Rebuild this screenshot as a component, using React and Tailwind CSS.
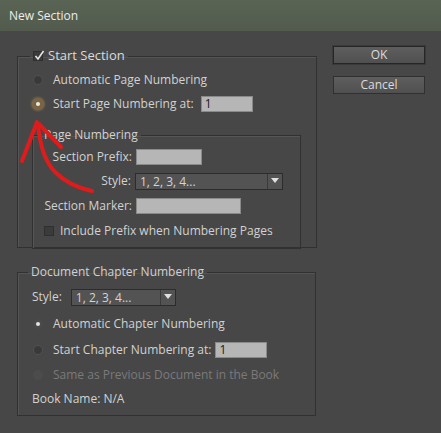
import React from "react";

const font = "font-['Open_Sans','DejaVu_Sans',sans-serif]";

function Radio({ on, disabled }) {
  if (on === "glow") {
    return (
      <span className="w-[12px] h-[12px] rounded-full bg-[#7a6446] shadow-[0_0_3px_#b08850] flex items-center justify-center">
        <span className="w-[4px] h-[4px] rounded-full bg-[#f2ead8]" />
      </span>
    );
  }
  if (on) {
    return (
      <span className="w-[10px] h-[10px] rounded-full bg-[#4a4a4a] flex items-center justify-center">
        <span className="w-[4px] h-[4px] rounded-full bg-[#e4e4e4]" />
      </span>
    );
  }
  return (
    <span
      className={`w-[10px] h-[10px] rounded-full ${disabled ? "bg-[#4c4c4c]" : "bg-[#393939] border border-[#525252]"}`}
    />
  );
}

function Check({ checked }) {
  return (
    <span className="w-[10px] h-[10px] bg-[#3b3b3b] border border-[#2f2f2f] flex items-center justify-center relative">
      {checked && (
        <svg width="11" height="11" viewBox="0 0 11 11" className="absolute -top-[2px] left-0">
          <path d="M1.5 6 L4 9 L9.5 1" stroke="#e6e6e6" strokeWidth="1.6" fill="none" />
        </svg>
      )}
    </span>
  );
}

function Field({ w, value, shift = "" }) {
  return (
    <div
      className={`${w} ${shift} h-[16px] bg-[#b6b6b6] border border-[#8a8a8a] text-[#1a1a1a] text-[12px] leading-[14px] pl-[3px]`}
    >
      {value}
    </div>
  );
}

function Select({ w }) {
  return (
    <div className={`${w} h-[17px] bg-[#535353] border border-[#2c2c2c] flex items-stretch`}>
      <div className="flex-1 text-[12px] leading-[15px] text-[#d4d4d4] pl-[4px] border-r border-[#3a3a3a]">
        1, 2, 3, 4...
      </div>
      <div className="w-[14px] flex items-center justify-center">
        <svg width="8" height="6" viewBox="0 0 8 6">
          <path d="M0 0 H8 L4 5 Z" fill="#e0e0e0" />
        </svg>
      </div>
    </div>
  );
}

function Button({ children, def }) {
  return (
    <div
      className={`w-[92px] h-[18px] flex items-center justify-center text-[12px] text-[#dcdcdc] bg-gradient-to-b from-[#5e5e5e] to-[#505050] border ${def ? "border-[#262626] shadow-[0_0_0_1px_#3a3a3a]" : "border-[#303030]"}`}
    >
      {children}
    </div>
  );
}

export default function App() {
  return (
    <div className={`w-[441px] h-[433px] bg-[#474747] flex flex-col relative overflow-hidden ${font}`}>
      <div className="h-[31px] bg-gradient-to-b from-[#5a6454] to-[#525b4e] flex items-center px-[9px] text-[12px] text-[#ececec]">
        New Section
      </div>

      <div className="flex-1 flex pl-[17px] pt-[17px]">
        <div className="w-[300px] flex flex-col text-[12px] text-[#d2d2d2]">
          {/* start section group */}
          <fieldset className="border border-[#313131] shadow-[inset_1px_1px_0_#555] h-[200px] px-[14px]">
            <legend className="-ml-[2px] px-[3px] flex items-center gap-[5px] h-[16px]">
              <Check checked />
              <span className="text-[13px] text-[#dadada]">Start Section</span>
            </legend>
            <div className="h-[24px] mt-[4px] flex items-center gap-[10px] pl-[1px]">
              <Radio />
              <span>Automatic Page Numbering</span>
            </div>
            <div className="h-[24px] flex items-center gap-[9px]">
              <Radio on="glow" />
              <span>Start Page Numbering at:</span>
              <Field w="w-[52px]" value="1" shift="-ml-[2px]" />
            </div>
            <fieldset className="mt-[11px] border border-[#313131] shadow-[inset_1px_1px_0_#555] h-[122px] w-[269px]">
              <legend className="ml-[8px] px-[3px] h-[16px] flex items-center">Page Numbering</legend>
              <div className="h-[24px] mt-[2px] flex items-center">
                <span className="w-[99px] text-right">Section Prefix:</span>
                <span className="w-[4px]" />
                <Field w="w-[66px]" />
              </div>
              <div className="h-[24px] flex items-center">
                <span className="w-[98px] text-right">Style:</span>
                <span className="w-[4px]" />
                <Select w="w-[148px]" />
              </div>
              <div className="h-[25px] flex items-center">
                <span className="w-[99px] text-right">Section Marker:</span>
                <span className="w-[4px]" />
                <Field w="w-[105px]" />
              </div>
              <div className="h-[25px] flex items-center gap-[6px] pl-[11px]">
                <Check />
                <span>Include Prefix when Numbering Pages</span>
              </div>
            </fieldset>
          </fieldset>

          {/* chapter numbering group */}
          <fieldset className="mt-[16px] border border-[#313131] shadow-[inset_1px_1px_0_#555] h-[152px] w-[299px] px-[14px]">
            <legend className="-ml-[4px] px-[3px] h-[16px] flex items-center">Document Chapter Numbering</legend>
            <div className="h-[26px] mt-[4px] flex items-center gap-[9px]">
              <span>Style:</span>
              <Select w="w-[105px]" />
            </div>
            <div className="h-[27px] flex items-center gap-[10px] pl-[1px]">
              <Radio on />
              <span>Automatic Chapter Numbering</span>
            </div>
            <div className="h-[25px] flex items-center gap-[10px] pl-[1px]">
              <Radio />
              <span>Start Chapter Numbering at:</span>
              <Field w="w-[52px]" value="1" shift="-ml-[6px]" />
            </div>
            <div className="h-[25px] flex items-center gap-[10px] pl-[1px] text-[#7a7a7a]">
              <Radio disabled />
              <span>Same as Previous Document in the Book</span>
            </div>
            <div className="h-[23px] flex items-center">Book Name: N/A</div>
          </fieldset>
        </div>

        <div className="ml-[16px] flex flex-col gap-[12px] -mt-[2px]">
          <Button def>OK</Button>
          <Button>Cancel</Button>
        </div>
      </div>

      <svg className="absolute left-0 top-0 pointer-events-none" width="441" height="433" viewBox="0 0 441 433">
        <path
          d="M38 124 C40 145 44 160 55 172 C65 182 78 188 92 191"
          stroke="#e01b1b"
          strokeWidth="4"
          fill="none"
          strokeLinecap="round"
        />
        <path d="M37 122 L22 161" stroke="#e01b1b" strokeWidth="4" fill="none" strokeLinecap="round" />
        <path d="M39 124 L61 147" stroke="#e01b1b" strokeWidth="4" fill="none" strokeLinecap="round" />
      </svg>
    </div>
  );
}
